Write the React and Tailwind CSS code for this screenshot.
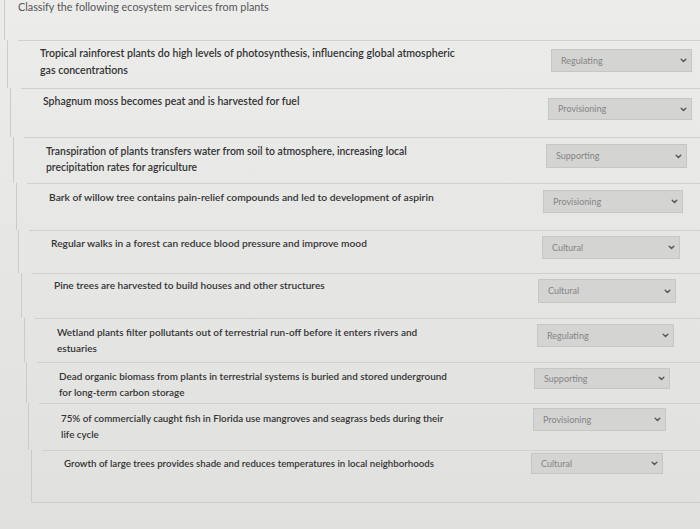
import React from "react";

const rows = [
  {
    lines: ["Tropical rainforest plants do high levels of photosynthesis, influencing global atmospheric", "gas concentrations"],
    value: "Regulating",
    wrap: "h-[48px] ml-[7px]",
    text: "pt-[4px] text-[10.6px] leading-[17px]",
    select: "mt-[8px] mr-[8px] w-[141px] h-[23px]",
  },
  {
    lines: ["Sphagnum moss becomes peat and is harvested for fuel"],
    value: "Provisioning",
    wrap: "h-[49px] ml-[10px]",
    text: "pt-[4px] text-[10.5px] leading-[17px]",
    select: "mt-[9px] mr-[8px] w-[144px] h-[22px]",
  },
  {
    lines: ["Transpiration of plants transfers water from soil to atmosphere, increasing local", "precipitation rates for agriculture"],
    value: "Supporting",
    wrap: "h-[46px] ml-[13px]",
    text: "pt-[5px] text-[10.4px] leading-[16px]",
    select: "mt-[6px] mr-[13px] w-[141px] h-[24px]",
  },
  {
    lines: ["Bark of willow tree contains pain-relief compounds and led to development of aspirin"],
    value: "Provisioning",
    wrap: "h-[47px] ml-[16px]",
    text: "pt-[5px] text-[10.3px] leading-[16px]",
    select: "mt-[6px] mr-[17px] w-[140px] h-[23px]",
  },
  {
    lines: ["Regular walks in a forest can reduce blood pressure and improve mood"],
    value: "Cultural",
    wrap: "h-[43px] ml-[18px]",
    text: "pt-[4px] text-[10.2px] leading-[16px]",
    select: "mt-[5px] mr-[20px] w-[138px] h-[23px]",
  },
  {
    lines: ["Pine trees are harvested to build houses and other structures"],
    value: "Cultural",
    wrap: "h-[45px] ml-[21px]",
    text: "pt-[3px] text-[10.1px] leading-[16px]",
    select: "mt-[5px] mr-[24px] w-[138px] h-[24px]",
  },
  {
    lines: ["Wetland plants filter pollutants out of terrestrial run-off before it enters rivers and", "estuaries"],
    value: "Regulating",
    wrap: "h-[44px] ml-[24px]",
    text: "pt-[5px] text-[10px] leading-[16px]",
    select: "mt-[5px] mr-[26px] w-[137px] h-[23px]",
  },
  {
    lines: ["Dead organic biomass from plants in terrestrial systems is buried and stored underground", "for long-term carbon storage"],
    value: "Supporting",
    wrap: "h-[41px] ml-[26px]",
    text: "pt-[5px] text-[9.9px] leading-[16px]",
    select: "mt-[5px] mr-[30px] w-[136px] h-[21px]",
  },
  {
    lines: ["75% of commercially caught fish in Florida use mangroves and seagrass beds during their", "life cycle"],
    value: "Provisioning",
    wrap: "h-[47px] ml-[28px]",
    text: "pt-[6px] text-[9.8px] leading-[16px]",
    select: "mt-[4px] mr-[34px] w-[133px] h-[23px]",
  },
  {
    lines: ["Growth of large trees provides shade and reduces temperatures in local neighborhoods"],
    value: "Cultural",
    wrap: "h-[53px] ml-[31px] border-b",
    text: "pt-[4px] text-[9.7px] leading-[16px]",
    select: "mt-[2px] mr-[37px] w-[132px] h-[21px]",
  },
];

const Chevron = () => (
  <svg width="7" height="5" viewBox="0 0 7 5" fill="none">
    <path d="M1.2 1.2l2.3 2.3 2.3-2.3" stroke="#5a5a5a" strokeWidth="1.5" strokeLinecap="round" strokeLinejoin="round" />
  </svg>
);

const Row = ({ row }) => (
  <div className={`${row.wrap} border-l border-[#cbcbc9]`}>
    <div className="ml-[10px] h-full border-t border-[#d0d0ce] flex justify-between">
      <div className={`${row.text} pl-[22px] font-semibold text-[#333] whitespace-nowrap`}>
        {row.lines.map((l, i) => (
          <div key={i}>{l}</div>
        ))}
      </div>
      <div
        className={`${row.select} shrink-0 bg-[#d4d4d2] border border-[#c6c6c4] flex items-center justify-between pl-[9px] pr-[4px]`}
      >
        <span className="text-[9px] text-[#858585]">{row.value}</span>
        <Chevron />
      </div>
    </div>
  </div>
);

export default function App() {
  return (
    <div className="w-[700px] h-[529px] overflow-hidden bg-linear-to-b from-[#ececeb] to-[#e0e0de] font-['Lato','Open_Sans',sans-serif]">
      <div className="h-[40px] ml-[4px] border-l border-[#cbcbc9]">
        <div className="pl-[13px] pt-[0px] text-[10.8px] leading-[14px] text-[#555]">
          Classify the following ecosystem services from plants
        </div>
      </div>
      {rows.map((r, i) => (
        <Row key={i} row={r} />
      ))}
    </div>
  );
}
